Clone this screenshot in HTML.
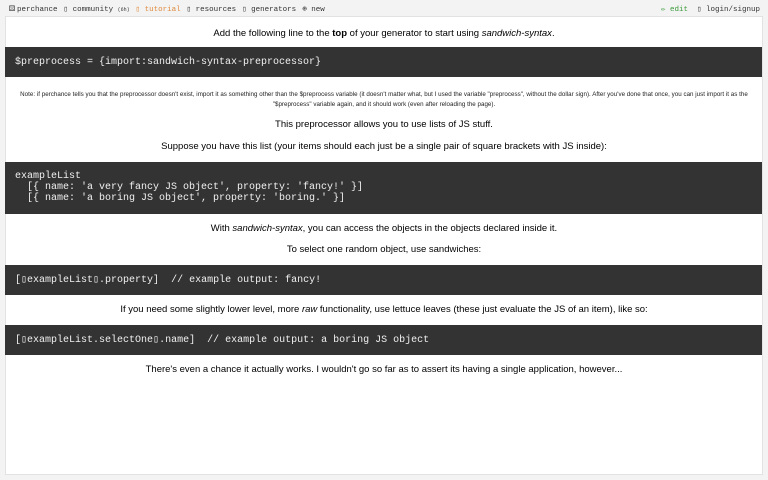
<!DOCTYPE html>
<html><head><meta charset="utf-8"><style>
*{margin:0;padding:0;box-sizing:border-box}
body{width:768px;height:480px;background:#f3f3f3;font-family:"Liberation Sans",sans-serif;color:#000;overflow:hidden;position:relative}
.nav{position:absolute;top:3px;left:9px;font-family:"Liberation Mono",monospace;font-size:7.5px;color:#333;white-space:nowrap}
.nav span{margin-right:6px}
.navr{position:absolute;top:4px;right:8px;font-family:"Liberation Mono",monospace;font-size:7.5px;color:#333}
.panel{position:absolute;left:5px;top:16px;width:758px;height:459px;background:#fff;border:1px solid #e2e2e2}
.t{position:absolute;left:0;width:756px;text-align:center;font-size:9.5px;letter-spacing:0;line-height:12px}
.code{position:absolute;left:-1px;width:757px;background:#333;color:#f0f0f0;font-family:"Liberation Mono",monospace;font-size:10px;padding-left:10px;white-space:pre;line-height:11px}
.note{position:absolute;left:0;width:756px;text-align:center;font-size:6.2px;line-height:10px;letter-spacing:0.03px;color:#222;padding:0 2px;white-space:nowrap}
</style></head><body>
<div class="nav"><span style="font-size:10px;margin-right:2px">⚄</span><span>perchance</span><span>▯ community <small style="font-size:5px">(6h)</small></span><span style="color:#e08a3c">▯ tutorial</span><span>▯ resources</span><span>▯ generators</span><span>⊕ new</span></div>
<div class="navr"><span style="color:#3a9a3a">✏ edit</span> &nbsp;▯ login/signup</div>
<div class="panel">
<div class="t" style="top:11px">Add the following line to the <b>top</b> of your generator to start using <i>sandwich-syntax</i>.</div>
<div class="code" style="top:30px;height:30px;padding-top:10px">$preprocess = {import:sandwich-syntax-preprocessor}</div>
<div class="note" style="top:73px">Note: if perchance tells you that the preprocessor doesn't exist, import it as something other than the $preprocess variable (it doesn't matter what, but I used the variable "preprocess", without the dollar sign). After you've done that once, you can just import it as the<br>"$preprocess" variable again, and it should work (even after reloading the page).</div>
<div class="t" style="top:102px">This preprocessor allows you to use lists of JS stuff.</div>
<div class="t" style="top:124px">Suppose you have this list (your items should each just be a single pair of square brackets with JS inside):</div>
<div class="code" style="top:145px;height:52px;padding-top:9px">exampleList
  [{ name: 'a very fancy JS object', property: 'fancy!' }]
  [{ name: 'a boring JS object', property: 'boring.' }]</div>
<div class="t" style="top:206px">With <i>sandwich-syntax</i>, you can access the objects in the objects declared inside it.</div>
<div class="t" style="top:227px">To select one random object, use sandwiches:</div>
<div class="code" style="top:248px;height:30px;padding-top:10px">[▯exampleList▯.property]  // example output: fancy!</div>
<div class="t" style="top:287px">If you need some slightly lower level, more <i>raw</i> functionality, use lettuce leaves (these just evaluate the JS of an item), like so:</div>
<div class="code" style="top:308px;height:30px;padding-top:10px">[▯exampleList.selectOne▯.name]  // example output: a boring JS object</div>
<div class="t" style="top:347px">There's even a chance it actually works. I wouldn't go so far as to assert its having a single application, however...</div>
</div>
</body></html>
